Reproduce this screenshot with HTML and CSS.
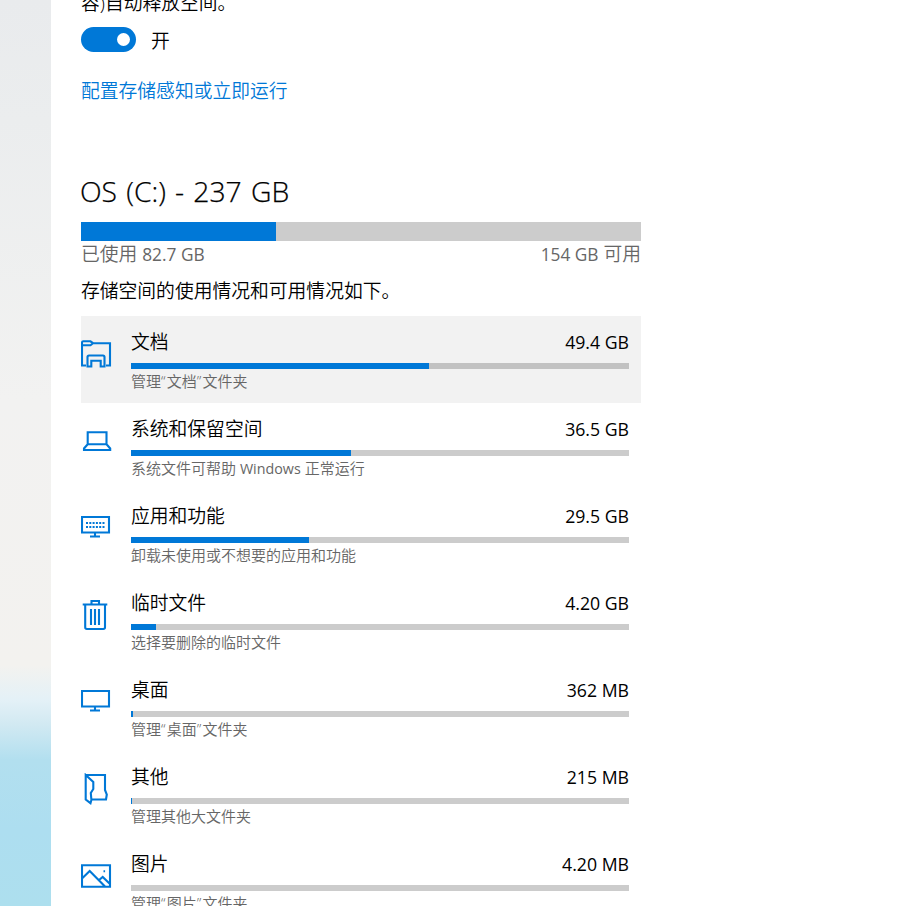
FILE: index.html
```html
<!DOCTYPE html>
<html lang="zh-CN">
<head>
<meta charset="utf-8">
<title>存储</title>
<link rel="stylesheet" href="styles.css">
</head>
<body>
<div class="screen">
<aside class="wallpaper"></aside>
<main class="page">
  <p class="intro">容)自动释放空间。</p>
  <div class="sense"><span class="toggle"></span><span>开</span></div>
  <a class="link">配置存储感知或立即运行</a>
  <h1 class="drive">OS (C:) - 237 GB</h1>
  <div class="total"><div class="total-used"></div></div>
  <div class="legend"><span>已使用 <span class="lat">82.7 GB</span></span><span><span class="lat">154 GB</span> 可用</span></div>
  <p class="note">存储空间的使用情况和可用情况如下。</p>
  <ul class="list">
    <li class="row active">
      <svg class="icon" viewBox="0 0 32 32"><path d="M5 27.5H1V4.5Q1 3.3 2.2 3.3H9.5L12 5.2H29V27.5H25M1 7.2H9.5L12 5.2M6.5 28.5V19Q6.5 17.5 8 17.5H22Q23.5 17.5 23.5 19V28.5H19.7V22.7H10.3V28.5Z"/></svg>
      <div class="body"><div class="head"><span>文档</span><span class="size">49.4 GB</span></div><div class="bar"><div class="fill" style="width:298px"></div></div><div class="sub">管理<span class="q">“</span>文档<span class="q">”</span>文件夹</div></div>
    </li>
    <li class="row">
      <svg class="icon" viewBox="0 0 32 32"><path d="M6.7 7.2H25.5V19.2H6.7ZM6.7 19.2L3 23.5V25H29.2V23.5L25.5 19.2"/></svg>
      <div class="body"><div class="head"><span>系统和保留空间</span><span class="size">36.5 GB</span></div><div class="bar"><div class="fill" style="width:220px"></div></div><div class="sub">系统文件可帮助 <span class="lat">Windows</span> 正常运行</div></div>
    </li>
    <li class="row">
      <svg class="icon" viewBox="0 0 32 32"><path d="M1 5H28V20.5H1ZM14 21V24M9 24.5H19"/><path class="keys" d="M5 11H24M5 15H24"/></svg>
      <div class="body"><div class="head"><span>应用和功能</span><span class="size">29.5 GB</span></div><div class="bar"><div class="fill" style="width:178px"></div></div><div class="sub">卸载未使用或不想要的应用和功能</div></div>
    </li>
    <li class="row">
      <svg class="icon" viewBox="0 0 32 32"><path d="M1.7 5.5H26.3M10.5 5V2H18V5M4.2 6V28.3Q4.2 30 5.9 30H22.3Q24 30 24 28.3V6M10 10V26M14 10V26M18 10V26"/></svg>
      <div class="body"><div class="head"><span>临时文件</span><span class="size">4.20 GB</span></div><div class="bar"><div class="fill" style="width:25px"></div></div><div class="sub">选择要删除的临时文件</div></div>
    </li>
    <li class="row">
      <svg class="icon" viewBox="0 0 32 32"><path d="M1 5H28V20.5H1ZM14 21V24M9 24.5H19"/></svg>
      <div class="body"><div class="head"><span>桌面</span><span class="size">362 MB</span></div><div class="bar"><div class="fill" style="width:2px"></div></div><div class="sub">管理<span class="q">“</span>桌面<span class="q">”</span>文件夹</div></div>
    </li>
    <li class="row">
      <svg class="icon" viewBox="0 0 32 32"><path d="M4.7 2H24V17L25.8 21.5L25 26.5H10.5M4.7 2V26.5L9.5 30.2L10.4 27L9.8 20L12.3 16V9Z"/></svg>
      <div class="body"><div class="head"><span>其他</span><span class="size">215 MB</span></div><div class="bar"><div class="fill" style="width:1px"></div></div><div class="sub">管理其他大文件夹</div></div>
    </li>
    <li class="row">
      <svg class="icon" viewBox="0 0 32 32"><path d="M1 5.2H29V26.8H1ZM1 18.5L8.7 11L24 26.5M17.5 20.5L21.7 17L29 24M22.5 11.3H24.1"/></svg>
      <div class="body"><div class="head"><span>图片</span><span class="size">4.20 MB</span></div><div class="bar"></div><div class="sub">管理<span class="q">“</span>图片<span class="q">”</span>文件夹</div></div>
    </li>
  </ul>
</main>
</div>
</body>
</html>
```
FILE: styles.css
```css
* { box-sizing: border-box; }
body {
  margin: 0;
  background: #fff;
  color: #000;
  font-family: "Open Sans", "Noto Sans CJK SC", sans-serif;
  font-size: 18.8px;
  font-weight: 350;
}
.screen { display: flex; height: 906px; overflow: hidden; }
.wallpaper {
  flex: none;
  width: 51px;
  background: linear-gradient(#e9ebed 0, #ebedee 120px, #f2f2f1 400px, #f3f2ef 665px, #e4f1f7 700px, #d1e9f2 725px, #b2dfef 760px, #addef0 830px, #addfee 906px);
}
.page { width: 560px; margin-left: 30px; white-space: nowrap; }
p, h1, ul { margin: 0; padding: 0; }
.intro { height: 27px; line-height: 28px; margin-top: -11px; }
.intro + .sense { margin-top: 11px; }
.sense { display: flex; align-items: center; gap: 15px; height: 25px; }
.toggle {
  display: flex;
  align-items: center;
  justify-content: flex-end;
  width: 55px;
  height: 25px;
  padding-right: 6px;
  border-radius: 13px;
  background: #0078d7;
}
.toggle::after { content: ""; width: 13px; height: 13px; border-radius: 50%; background: #fff; }
.link { display: block; height: 28px; line-height: 28px; margin-top: 25px; color: #0078d7; }
.drive { height: 40px; line-height: 40px; margin: 66px 0 11px -1px; font-size: 28.3px; font-weight: 330; word-spacing: 1.8px; -webkit-text-stroke: .25px #000; }
.total { height: 19px; background: #ccc; }
.total-used { width: 195px; height: 19px; background: #0078d7; }
.legend { display: flex; justify-content: space-between; height: 27px; line-height: 27px; color: #666; }
.lat { font-size: 17.3px; font-weight: 400; }
.note { height: 28px; line-height: 27px; margin: 10px 0 10px; }
.list { list-style: none; }
.row { display: flex; height: 87px; padding: 0 12px 0 0; }
.active { background: #f2f2f2; }
.icon { flex: none; width: 32px; height: 32px; margin: 22px 18px 0 0; fill: none; stroke: #0078d7; stroke-width: 2.1; }
.keys { stroke-dasharray: 2 1.3; }
.body { flex: 1; }
.head { display: flex; justify-content: space-between; height: 47px; line-height: 28px; padding-top: 12px; }
.size { font-size: 17.7px; font-weight: 400; line-height: 29px; }
.bar { height: 6px; background: #ccc; }
.active .bar { background: #c2c2c2; }
.fill { height: 6px; background: #0078d7; }
.sub { height: 24px; line-height: 24px; font-size: 15px; color: #666; }
.sub .lat { font-size: 14.3px; }
.q { letter-spacing: 1.2px; }
```
